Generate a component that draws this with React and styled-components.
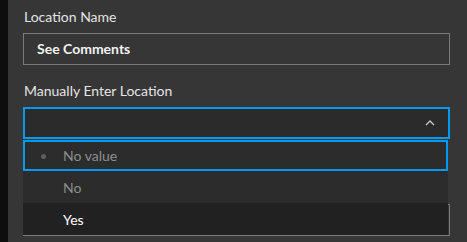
import styled, { createGlobalStyle } from "styled-components";

const Global = createGlobalStyle`
  html, body {
    margin: 0;
    padding: 0;
    background: #0e0e0e;
  }
  * { box-sizing: border-box; }
`;

const Page = styled.div`
  display: flex;
  height: 242px;
  overflow: hidden;
  font-family: Lato, "Noto Sans", sans-serif;
  background: #0e0e0e;
`;

const Panel = styled.div`
  flex: 1;
  margin-left: 8px;
  background: #363636;
  padding: 7px 17px 0 15px;
  display: flex;
  flex-direction: column;
`;

const Field = styled.div`
  display: flex;
  flex-direction: column;
  margin-top: ${(p) => p.$top || 0}px;
  margin-bottom: ${(p) => p.$gap ?? 16}px;
`;

const Label = styled.div`
  font-size: 14px;
  line-height: 20px;
  color: #e4e4e4;
  margin-bottom: 6px;
  padding-left: 1px;
`;

const Input = styled.div`
  height: 32px;
  border: 1px solid #7a7a7a;
  background: #363636;
  color: #f2f2f2;
  font-size: 14px;
  font-weight: 700;
  line-height: 30px;
  padding-left: 13px;
`;

const SelectWrap = styled.div`
  position: relative;
`;

const Select = styled.div`
  height: 32px;
  border: 2px solid #009af2;
  background: #2b2b2b;
  display: flex;
  align-items: center;
  justify-content: flex-end;
  padding-right: 13px;
`;

const Menu = styled.div`
  position: absolute;
  top: 33px;
  left: 0;
  right: 2px;
  background: #2c2c2c;
  z-index: 2;
`;

const Item = styled.div`
  position: relative;
  height: ${(p) => (p.$focused ? 31 : 32)}px;
  display: flex;
  align-items: center;
  padding-left: ${(p) => (p.$focused ? 38 : 40)}px;
  font-size: 14px;
  color: ${(p) => (p.$selected ? "#ffffff" : "#8e8e8e")};
  background: ${(p) => (p.$selected ? "#212121" : "transparent")};
  border: ${(p) => (p.$focused ? "2px solid #009af2" : "none")};
`;

const Dot = styled.span`
  position: absolute;
  left: 16px;
  top: 50%;
  width: 5px;
  height: 5px;
  margin-top: -2px;
  border-radius: 50%;
  background: #5e5e5e;
`;

const Chevron = () => (
  <svg width="10" height="6" viewBox="0 0 10 6" fill="none">
    <path d="M1 5 L5 1 L9 5" stroke="#c4c4c4" strokeWidth="1.4" />
  </svg>
);

export default function App() {
  return (
    <>
      <Global />
      <Page>
        <Panel>
          <Field>
            <Label>Location Name</Label>
            <Input>See Comments</Input>
          </Field>
          <Field $gap={0}>
            <Label>Manually Enter Location</Label>
            <SelectWrap>
              <Select>
                <Chevron />
              </Select>
              <Menu>
                <Item $focused>
                  <Dot />
                  No value
                </Item>
                <Item>No</Item>
                <Item $selected>Yes</Item>
              </Menu>
              <Field $top={65}>
                <Input />
              </Field>
            </SelectWrap>
          </Field>
        </Panel>
      </Page>
    </>
  );
}
